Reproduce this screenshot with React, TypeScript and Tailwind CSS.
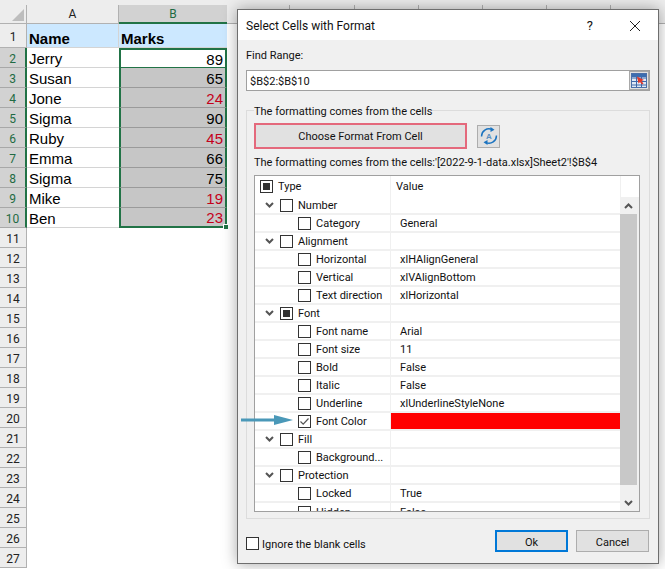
import { useState } from 'react';

const ui = "font-['Roboto',sans-serif] text-[11px] leading-none text-[#111]";
const hdr = "font-['Roboto',sans-serif] text-[12px] leading-none";

const sheetRows = [
  { name: 'Jerry', marks: 89 },
  { name: 'Susan', marks: 65 },
  { name: 'Jone', marks: 24, red: true },
  { name: 'Sigma', marks: 90 },
  { name: 'Ruby', marks: 45, red: true },
  { name: 'Emma', marks: 66 },
  { name: 'Sigma', marks: 75 },
  { name: 'Mike', marks: 19, red: true },
  { name: 'Ben', marks: 23, red: true },
];

const emptyRows = Array.from({ length: 17 }, (_, i) => i + 11);
const otherColumns = Array.from({ length: 7 }, (_, i) => i);

type TreeRow = {
  label: string;
  value?: string;
  group?: boolean;
  partial?: boolean;
  checked?: boolean;
  swatch?: boolean;
};

const treeRows: TreeRow[] = [
  { label: 'Number', group: true },
  { label: 'Category', value: 'General' },
  { label: 'Alignment', group: true },
  { label: 'Horizontal', value: 'xlHAlignGeneral' },
  { label: 'Vertical', value: 'xlVAlignBottom' },
  { label: 'Text direction', value: 'xlHorizontal' },
  { label: 'Font', group: true, partial: true },
  { label: 'Font name', value: 'Arial' },
  { label: 'Font size', value: '11' },
  { label: 'Bold', value: 'False' },
  { label: 'Italic', value: 'False' },
  { label: 'Underline', value: 'xlUnderlineStyleNone' },
  { label: 'Font Color', checked: true, swatch: true },
  { label: 'Fill', group: true },
  { label: 'Background...' },
  { label: 'Protection', group: true },
  { label: 'Locked', value: 'True' },
  { label: 'Hidden', value: 'False' },
];

const Check = ({ partial, checked }: { partial?: boolean; checked?: boolean }) => (
  <span className="flex h-[13px] w-[13px] shrink-0 items-center justify-center border border-[#333] bg-white">
    {partial && <span className="h-[7px] w-[7px] bg-[#333]" />}
    {checked && (
      <svg viewBox="0 0 11 11" className="h-[11px] w-[11px]" fill="none" stroke="#555" strokeWidth="1.2">
        <path d="M1.5 5.5 4.2 8.2 9.5 2.5" />
      </svg>
    )}
  </span>
);

const Chevron = ({ up }: { up?: boolean }) => (
  <svg viewBox="0 0 9 6" className="h-[6px] w-[9px] shrink-0" fill="none" stroke="#555" strokeWidth="2">
    <path d={up ? 'M1 5 4.5 1.5 8 5' : 'M1 1 4.5 4.5 8 1'} />
  </svg>
);

const RangeIcon = () => (
  <svg viewBox="0 0 16 15" className="h-[15px] w-[16px]">
    <rect x="0.5" y="0.5" width="15" height="14" fill="#dfe8f5" stroke="#4a6fa8" />
    <path d="M1 5h14M1 8.5h14M1 12h14M5.5 1v13M10.5 1v13" stroke="#3f68a8" strokeWidth="1" />
    <rect x="1" y="1" width="14" height="3" fill="#3b6db0" />
    <path d="M6 3.5 13 7 10.5 8 12.5 10.5 11 11.5 9 9 7.5 10.5Z" fill="#e0392b" />
  </svg>
);

const RefreshIcon = () => (
  <svg viewBox="0 0 18 18" className="h-[18px] w-[18px]" fill="none">
    <path d="M1.6 9.5A7.4 7.4 0 0 1 12 2.4" stroke="#1a73c0" strokeWidth="1.5" />
    <path d="M16.4 8.5A7.4 7.4 0 0 1 6 15.6" stroke="#1a73c0" strokeWidth="1.5" />
    <path d="M10.5 0 14.5 2.8 10.5 5Z M7.5 13 3.5 15.2 7.5 18Z" fill="#1a73c0" />
    <text x="9" y="12" textAnchor="middle" fontSize="8" fontWeight="700" fill="#5b8fc0" fontFamily="Liberation Sans, sans-serif">A</text>
  </svg>
);

const Sheet = () => (
  <div className="flex w-[665px] flex-col bg-white font-['Liberation_Sans',sans-serif] leading-none">
    <div className="h-[5px] bg-[#ededed]" />

    {/* column letters */}
    <div className="flex h-[19px] bg-[#ededed] text-[#222]">
      <div className="flex w-[27px] shrink-0 items-end justify-end border-r border-b border-[#b1b1b1] p-[2px]">
        <span className="h-0 w-0 border-b-[12px] border-l-[12px] border-b-[#bdbdbd] border-l-transparent" />
      </div>
      <div className={`${hdr} flex w-[92px] shrink-0 items-center justify-center border-r border-b border-[#b1b1b1]`}>A</div>
      <div className={`${hdr} flex w-[108px] shrink-0 items-center justify-center border-b-2 border-[#217346] bg-[#d2d2d2] text-[#1f6b43]`}>B</div>
      {otherColumns.map(c => (
        <div key={c} className={`shrink-0 border-r border-b border-[#b1b1b1] ${c === 0 ? 'w-[63px]' : c === 1 ? 'w-[65px]' : 'w-[64px]'}`} />
      ))}
    </div>

    {/* header row */}
    <div className="flex h-[24px]">
      <div className={`${hdr} flex w-[27px] shrink-0 items-center justify-center border-r border-b border-[#b1b1b1] bg-[#ededed] pt-[3px] text-[#222]`}>1</div>
      <div className="flex w-[92px] shrink-0 items-end border-r border-b border-[#d4d4d4] bg-[#cce8ff] pb-[1px] pl-[2px] text-[15px] font-bold text-black">Name</div>
      <div className="flex w-[108px] shrink-0 items-end border-b border-[#d4d4d4] bg-[#cce8ff] pb-[1px] pl-[2px] text-[15px] font-bold text-black">Marks</div>
    </div>

    {/* data rows */}
    {sheetRows.map((row, i) => (
      <div key={i} className="flex h-[20px]">
        <div className={`${hdr} flex w-[27px] shrink-0 items-center justify-center border-r-2 border-b border-r-[#217346] border-b-[#a8a8a8] bg-[#d2d2d2] pt-[2px] text-[#1f6b43]`}>{i + 2}</div>
        <div className="flex w-[92px] shrink-0 items-center border-b border-[#d4d4d4] pt-[2px] pl-[2px] text-[15px] text-black">{row.name}</div>
        <div className={`relative flex w-[108px] shrink-0 items-center justify-end border-x-2 border-[#217346] pt-[1px] pr-[2px] text-[15px] ${i === 0 ? 'border-t-2 bg-white' : 'border-b-[#9a9a9a] bg-[#c6c6c6]'} ${i === 8 ? 'border-b-2 border-b-[#217346]' : 'border-b'} ${row.red ? 'text-[#c4001a]' : 'text-black'}`}>
          {row.marks}
          {i === 8 && (
            <span className="absolute -right-[4px] -bottom-[4px] h-[6px] w-[6px] border border-white bg-[#217346]" />
          )}
        </div>
      </div>
    ))}

    {/* empty rows */}
    {emptyRows.map(n => (
      <div key={n} className="flex h-[20px]">
        <div className={`${hdr} flex w-[27px] shrink-0 items-center justify-center border-r border-b border-[#b1b1b1] bg-[#ededed] pt-[2px] text-[#222]`}>{n}</div>
      </div>
    ))}
  </div>
);

const Row = ({ row, last }: { row: TreeRow; last: boolean }) => (
  <div className={`flex h-[18px] shrink-0 items-center ${last ? '' : 'border-b-2 border-[#f0f0f0]'}`}>
    <div className={`flex h-full w-[135px] shrink-0 items-center ${row.group ? 'pl-[10px]' : 'pl-[43px]'}`}>
      {row.group && (
        <span className="mr-[6px]">
          <Chevron />
        </span>
      )}
      <Check partial={row.partial} checked={row.checked} />
      <span className="ml-[5px] whitespace-nowrap">{row.label}</span>
    </div>
    <div className="h-full w-px shrink-0 bg-[#f0f0f0]" />
    <div className="flex h-full w-[229px] shrink-0 items-center">
      {row.swatch ? <div className="h-full w-full bg-[#ff0000]" /> : <span className="ml-[9px]">{row.value}</span>}
    </div>
  </div>
);

const Dialog = () => {
  const [ignoreBlank] = useState(false);
  return (
    <div className={`${ui} absolute top-[9px] left-[237px] flex h-[555px] w-[422px] flex-col border border-[#6e6e6e] bg-[#f0f0f0] shadow-[0_0_14px_rgba(0,0,0,0.35)]`}>
      <div className="flex h-[30px] shrink-0 items-center bg-white pt-[1px] pr-[18px] pl-[8px] text-[12px]">
        <span className="flex-1">Select Cells with Format</span>
        <span className="mr-[37px] text-[13px]">?</span>
        <svg viewBox="0 0 10 10" className="h-[10px] w-[10px]" fill="none" stroke="#222" strokeWidth="1">
          <path d="M0 0 10 10M10 0 0 10" />
        </svg>
      </div>

      <div className="flex flex-1 flex-col px-[8px]">
        <div className="mt-[10px]">Find Range:</div>
        <div className="mt-[9px] flex h-[21px] items-center justify-between border border-[#a0a0a0] bg-white pl-[3px]">
          <span className="pt-[1px]">$B$2:$B$10</span>
          <span className="flex h-[19px] w-[20px] items-center justify-center border border-[#a8a8a8] bg-[#e1e1e1]">
            <RangeIcon />
          </span>
        </div>

        <div className="relative mt-[19px] flex h-[409px] flex-col border border-[#dcdcdc] px-[7px] pt-[12px]">
          <span className="absolute -top-[5px] left-[7px] bg-[#f0f0f0]">The formatting comes from the cells</span>
          <div className="flex items-center">
            <div className="flex h-[26px] w-[213px] items-center justify-center border-2 border-[#e4697c] bg-[#e1e1e1] pt-[1px]">Choose Format From Cell</div>
            <div className="ml-[10px] flex h-[23px] w-[23px] items-center justify-center border border-[#adadad] bg-[#e1e1e1]">
              <RefreshIcon />
            </div>
          </div>
          <div className="mt-[8px] whitespace-nowrap">The formatting comes from the cells:'[2022-9-1-data.xlsx]Sheet2'!$B$4</div>

          <div className="mt-[7px] flex h-[337px] w-[386px] border border-[#a0a0a0] bg-white">
            <div className="flex w-[365px] flex-col overflow-hidden">
              <div className="flex h-[21px] shrink-0 items-center">
                <div className="flex w-[135px] shrink-0 items-center pl-[5px]">
                  <Check partial />
                  <span className="ml-[5px]">Type</span>
                </div>
                <div className="h-full w-px bg-[#f0f0f0]" />
                <span className="ml-[5px]">Value</span>
              </div>
              {treeRows.map((row, i) => (
                <Row key={i} row={row} last={i === treeRows.length - 1} />
              ))}
            </div>
            <div className="flex flex-1 flex-col">
              <div className="h-[21px] shrink-0 border-l border-[#f0f0f0]" />
              <div className="flex flex-1 flex-col bg-[#f0f0f0] pr-[2px]">
                <div className="flex h-[17px] items-center justify-center">
                  <Chevron up />
                </div>
                <div className="h-[271px] bg-[#c8c8c8]" />
                <div className="mt-auto flex h-[17px] items-center justify-center">
                  <Chevron />
                </div>
              </div>
            </div>
          </div>
        </div>

        <div className="mt-[11px] flex items-start justify-between">
          <label className="mt-[7px] flex items-center">
            <Check checked={ignoreBlank} />
            <span className="ml-[3px] pt-[1px]">Ignore the blank cells</span>
          </label>
          <div className="flex gap-[8px] pr-[1px]">
            <div className="flex h-[22px] w-[73px] items-center justify-center border-2 border-[#0078d7] bg-[#e1e1e1] pt-[2px]">Ok</div>
            <div className="flex h-[22px] w-[73px] items-center justify-center border border-[#adadad] bg-[#e1e1e1] pt-[2px]">Cancel</div>
          </div>
        </div>
      </div>
    </div>
  );
};

const App = () => {
  return (
    <div className="relative h-[569px] w-[665px] overflow-hidden bg-white">
      <Sheet />
      <Dialog />
      {/* callout arrow */}
      <svg viewBox="0 0 52 10" className="absolute top-[415px] left-[241px] h-[10px] w-[52px]">
        <path d="M0 3.5H33V0L52 5 33 10V6.5H0Z" fill="#4a98b8" />
      </svg>
    </div>
  );
};

export default App;
